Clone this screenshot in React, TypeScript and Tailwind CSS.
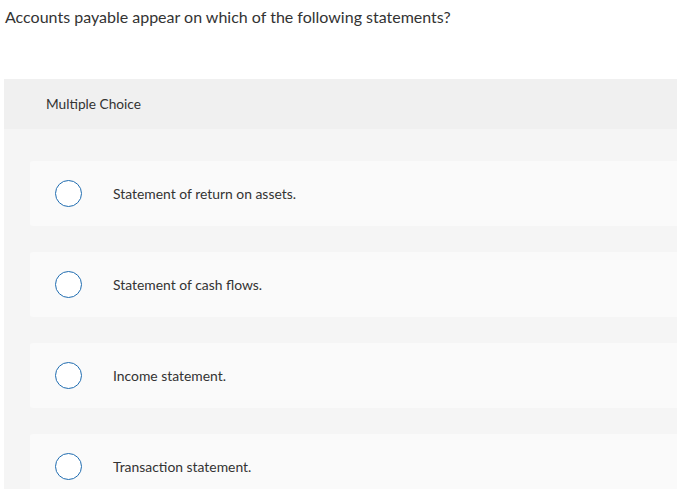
import React from 'react';

const options = [
  'Statement of return on assets.',
  'Statement of cash flows.',
  'Income statement.',
  'Transaction statement.',
];

export default function App() {
  return (
    <div className="min-h-screen bg-white font-['Lato','Open_Sans',sans-serif] text-[#333]">
      <div className="px-[5px] pt-[6px] h-[79px]">
        <p className="text-[16px] leading-[22px]">Accounts payable appear on which of the following statements?</p>
      </div>
      <div className="ml-[4px] bg-[#f5f5f5]">
        <div className="h-[50px] bg-[#f0f0f0] pl-[42px] flex items-center pt-[1px]">
          <span className="text-[13.7px]">Multiple Choice</span>
        </div>
        <div className="pt-[32px] pl-[26px] flex flex-col gap-[26px]">
          {options.map((opt) => (
            <div key={opt} className="h-[65px] bg-[#fafafa] rounded-l-[3px] flex items-center pl-[25px]">
              <span className="w-[27px] h-[27px] rounded-full border-[1.5px] border-[#1f6cb0] bg-white shrink-0" />
              <span className="ml-[31px] text-[13.9px] pt-[1px]">{opt}</span>
            </div>
          ))}
        </div>
      </div>
    </div>
  );
}
